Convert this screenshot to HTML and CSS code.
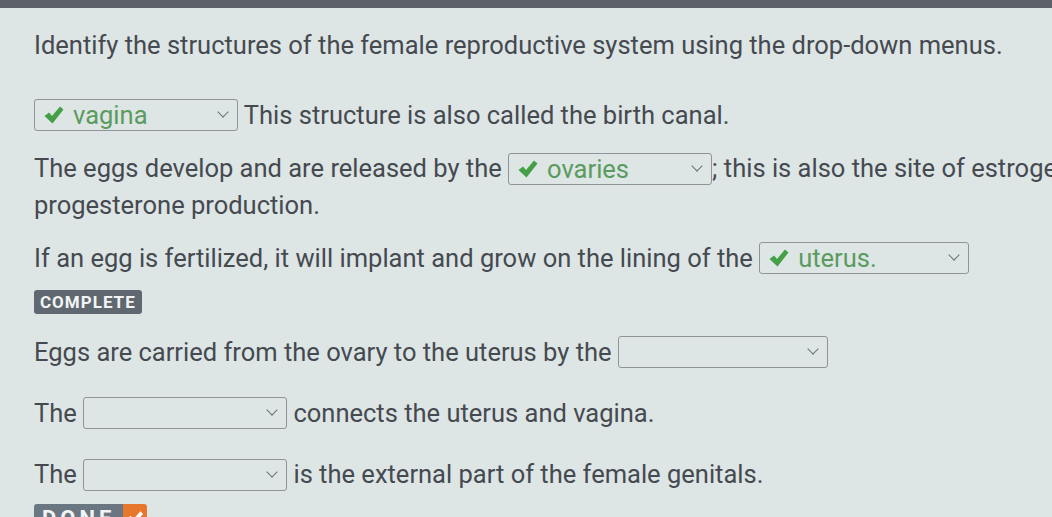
FILE: index.html
```html
<!DOCTYPE html>
<html lang="en">
<head>
  <meta charset="UTF-8" />
  <title>Female Reproductive System</title>
  <link rel="stylesheet" href="styles.css">
</head>
<body>
  <div class="topbar"></div>

  <div class="actividad">
    <p class="titulo">Identify the structures of the female reproductive system using the drop-down menus.</p>

    <p class="fila">
      <span class="menu correcto"><svg class="check" viewBox="0 0 20 20"><path d="M0.5 11 L5 7.5 L8 11 L16 1.5 L19.5 4.5 L8.5 18.5 Z"/></svg>vagina<span class="flecha"></span></span>
      This structure is also called the birth canal.
    </p>

    <p class="fila">
      The eggs develop and are released by the
      <span class="menu correcto"><svg class="check" viewBox="0 0 20 20"><path d="M0.5 11 L5 7.5 L8 11 L16 1.5 L19.5 4.5 L8.5 18.5 Z"/></svg>ovaries<span class="flecha"></span></span>; this is also the site of estrogen and
      progesterone production.
    </p>

    <p class="fila">
      If an egg is fertilized, it will implant and grow on the lining of the
      <span class="menu correcto ancho"><svg class="check" viewBox="0 0 20 20"><path d="M0.5 11 L5 7.5 L8 11 L16 1.5 L19.5 4.5 L8.5 18.5 Z"/></svg>uterus.<span class="flecha"></span></span>
    </p>

    <div class="badge">COMPLETE</div>

    <p class="fila suelta">
      Eggs are carried from the ovary to the uterus by the
      <span class="menu ancho"><span class="flecha"></span></span>
    </p>

    <p class="fila suelta">
      The <span class="menu"><span class="flecha"></span></span> connects the uterus and vagina.
    </p>

    <p class="fila suelta">
      The <span class="menu"><span class="flecha"></span></span> is the external part of the female genitals.
    </p>

    <div class="done">
      <span class="done-txt">DONE</span><span class="done-check"><svg viewBox="0 0 20 20"><path d="M1.5 10.5 L5 7.5 L8.5 11 L16 2.5 L19 5.5 L8.5 17 Z"/></svg></span>
    </div>
  </div>
</body>
</html>
```

FILE: styles.css
```css
/* hoja de trabajo con menus desplegables */
body {
  margin: 0;
  background: #dde5e5;
  color: #454a50;
  font-family: Roboto, "Noto Sans", sans-serif;
  overflow: hidden;
}

.topbar {
  height: 8px;
  background: #5d6268;
}

.actividad {
  width: 1130px;
  padding: 22px 0 0 34px;
  font-size: 25.5px;
}

.titulo {
  margin: 0 0 37px;
  line-height: 30px;
}

.fila {
  margin: 0 0 17px;
  line-height: 36px;
}

.fila.suelta {
  margin-bottom: 25px;
}

.menu {
  display: inline-flex;
  align-items: center;
  box-sizing: border-box;
  width: 204px;
  height: 32px;
  padding: 0 10px 0 9px;
  border: 1px solid #8e9499;
  border-radius: 3px;
  vertical-align: middle;
  color: #5a9b5e;
  position: relative;
  top: -2px;
}

.menu.ancho {
  width: 210px;
}

.check {
  width: 20px;
  height: 20px;
  fill: #43a047;
  margin-right: 9px;
}

.flecha {
  margin-left: auto;
  width: 7px;
  height: 7px;
  border-right: 1.5px solid #6c7278;
  border-bottom: 1.5px solid #6c7278;
  transform: rotate(45deg);
  position: relative;
  top: -3px;
}

.badge {
  width: fit-content;
  background: #5f6870;
  color: #f2f4f4;
  font-weight: bold;
  font-size: 17px;
  letter-spacing: 1px;
  padding: 2px 6px;
  border-radius: 3px;
  margin: -3px 0 20px;
}

.done {
  display: flex;
  height: 28px;
  margin-top: -14px;
}

.done-txt {
  background: #6b7683;
  color: #f2f4f4;
  font-weight: bold;
  font-size: 22px;
  letter-spacing: 4px;
  padding: 2px 8px 2px 8px;
  border-radius: 3px 0 0 3px;
}

.done-check {
  display: flex;
  align-items: center;
  background: #e8772e;
  padding: 0 3px;
  border-radius: 0 3px 3px 0;
}

.done-check svg {
  width: 18px;
  height: 18px;
  fill: #fff;
}
```
